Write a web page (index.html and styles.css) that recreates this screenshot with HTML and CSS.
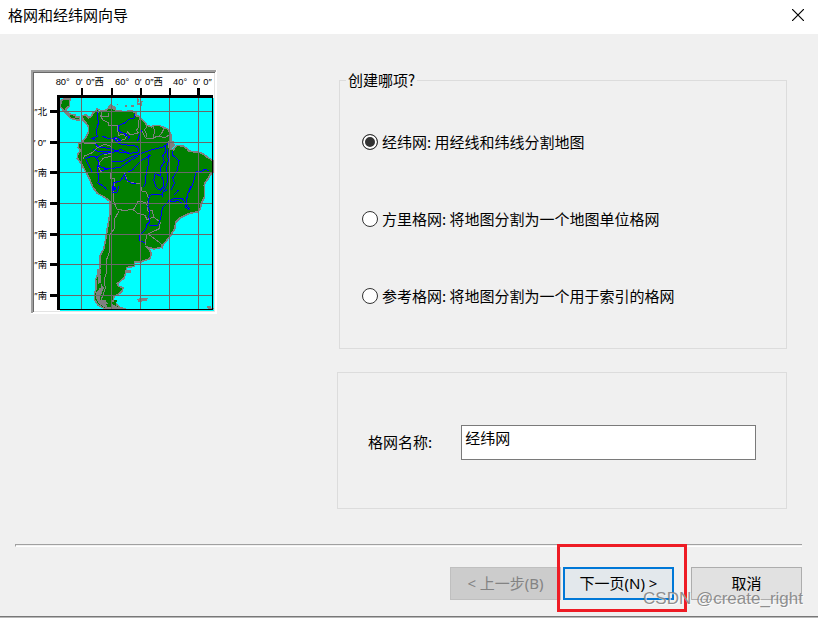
FILE: index.html
```
<!DOCTYPE html>
<html lang="zh-Hans">
  <head>
    <meta charset="UTF-8" />
    <meta name="viewport" content="width=device-width, initial-scale=1.0" />
    <title>格网和经纬网向导</title>
    <link rel="stylesheet" href="styles.css">
  </head>
  <body>
    <header class="title-bar">
      <h1>格网和经纬网向导</h1>
      <button class="close-button" type="button" aria-label="关闭">
        <svg width="12" height="12" viewBox="0 0 12 12">
          <path d="M0 0L12 12M12 0L0 12" stroke="#000" stroke-width="1.2" />
        </svg>
      </button>
    </header>

    <form class="wizard">
      <div class="content">
        <svg class="preview" width="186" height="244" viewBox="18 15 558 732" shape-rendering="crispEdges" role="img" aria-label="地图预览">
          <!-- frame -->
          <path fill="#fff" d="M18 15h558v732H18z" />
          <path fill="#a0a0a0" d="M18 15h555v6H24v723h-6z" />
          <path fill="#696969" d="M24 21h546v3H27v717h-3z" />
          <path fill="#e3e3e3" d="M567 24h3v717H27v-3h540z" />
          <!-- sea -->
          <path fill="#0ff" d="M105 99h462v639H105z" />
          <!-- land -->
          <g fill="#008000" stroke="#808080" stroke-width="5">
            <path d="M108 107L117 102H135L133 112V123L122 132L126 142L136 148L150 150L153 157L163 155V166L150 163L138 160L126 147L117 138L106 125Z" />
            <path d="M172 152L183 150L191 158L199 154L204 143L214 138V131L221 134L219 142L229 137L242 136L250 130L264 130L275 137L300 140L316 137L334 143L332 151L343 155L351 164L360 172L366 181L380 186L386 181H402L416 187L430 193L437 207V224L440 239L434 252L445 254L456 241L474 243L485 250L492 258L512 261L530 264L548 277L564 287V322L555 330L550 341L541 351L538 362V397L529 415L526 430L519 440L490 446L466 458L452 472L450 489L438 510L422 530L408 547L387 552L366 546L372 553L379 566L374 581L350 590H328V604L305 608L303 621L297 640L289 646L277 656L280 664L295 668L290 680L276 690L268 693L263 708L275 719L286 728L302 732H240L218 719L208 703V685L213 672L212 643L219 627L225 606L226 571L236 553L241 528L247 491L254 451L255 409L236 395L217 385L203 366L193 340L177 311L166 292L157 280L158 269L166 257L160 248L161 237L172 230L181 219L190 202V184L183 174L174 165Z" />
          </g>
          <!-- southern fjords and islands -->
          <g fill="#808080">
            <path d="M217 613h12l-3 17 7 11-5 14 9 13-8 20-4 6v12h17l8 12h22l-4 5 17 3 22 6v3h-45l-21-6-19-13-9-17V684l10-13-5-31z" />
            <path d="M336 702l15-4 18 2-4 9-25 1zM300 616h17v9h-17zM546 724h12v5h9v4h-15l-6-4z" />
            <path d="M337 100h3l2 9-3 6h12v6h-14zM250 123l9-7 4 6 11 4v6h-24zM345 109h9v3h-3v12h-3zM429 229h17l4 12-14 14-8-8z" />
            <path d="M318 121h8v4h-8zM300 120h6v5h-6zM275 117h3v4h-3z" />
          </g>
          <path fill="#008000" d="M246 694h17v12h-14zM267 704h9l-3 15h-9zM222 655h5v13h-5zM243 716h18v9h-15zM229 636h5v18h-5z" />
          <!-- country borders -->
          <g fill="none" stroke="#808080" stroke-width="3">
            <path d="M229 140v14h20v-9M225 149l8 15 17 9v7h27l3 32 12-4 12 6-5 10-24 3M280 222l-15-3-4 12 22 1M347 157l-7 12 1 18-7 9 6 8-24 6-8-10-6 12M366 184l-8 12 7 10-3 14M386 186l3 17-5 12M417 190l-7 15-11 11M350 196l12 23 20 2 15-8 22 5 15-9" />
            <path d="M174 233l18 4 20-3 5 14-17 16-22 9-4 8M217 248l21-10 20 6M238 269l20-5v9l-23 7-11 12-4 13 10 18 27 1v15h10l2 17-5 21M260 324l30-1 8 1 10 25 25 7h13l5 22 13 3 6 19-2 17" />
            <path d="M264 369v36l12 27 18 4 31-2 15-26 23 5M325 434l12 11 23 6 6 13 19-8-2-20M385 456l21 15-3 20-37 17M371 508l38 29 4 14M365 510l-5 31M282 438l-12 22-3 32-14 20 2 45-10 26 1 35-9 26 4 26-13 36M365 413l4 26 16-4" />
          </g>
          <!-- rivers -->
          <g fill="none" stroke="#00f" stroke-width="3">
            <path d="M217 140l3 35-7 25 4 14-16 7 12 6M329 148l1 10-19 5-10 10-21 9v12l8 9 14 3 11 10-6 9M232 213l15 7 20 1 8 8 12-3M350 196l-7 14-5 17M261 222l11-5 16 9M299 209l16 6" />
            <path d="M212 237l9 9 35 5 25 10 33 4 25-4M278 235l33 6 27 3 4 16M204 252l11 6 16 2 27 1M180 282l18-8 18 3 17-12 30-2 23-10 27 12M182 284l11 22 9 17M210 274l12 17-6 22 6 25-4 16 15 8 12 13M216 302l32 10M260 288l29 2 32-15 34-12 27-9 32-8 15-10" />
            <path d="M228 317l30-7 27-2 25-18 29-17M257 385l8-15v-16l22-7 13-21 24-13 27-28 26-14M299 326l3 17 17 11 15 2M282 363l-6 18-14 3M369 265l2 32-7 25-4 34-4 11M421 244v17l-8 12 5 18-11 17-1 24-16-6-4 20 8 22 12 8 9-10v-18l-5-13M426 252l4 34-6 24 5 27-4 23-12 24M442 258v12l20 17-6 30-13 22 5 15-9 20M552 318l-12-6-14 9-12-1-5 18-8 24-13 25" />
            <path d="M238 365l7 9M262 362l5 15M498 363l-11 26-3 26-2 12 10 6M460 376l-14 15M426 374l-12 7-1 14M410 388h-20l-16 3-4 17-1 17 5 13-3 18 4 14-10 10-3 14-19 16 2 17 16 8M432 407l-20 22-5 29-7 22-27 2M434 407l15-7h23l5 9 17 23M435 410l25-3 12 9" />
            <path fill="#00f" d="M263 367h7v6h-7z" />
          </g>
          <!-- graticule -->
          <path fill="none" stroke="#696969" stroke-width="3" d="M170 99V732M260 99V732M347 99V732M434 99V732M520 99V732M105 139H561M105 232H561M105 322H561M105 415H561M105 508H561M105 598H561M105 691H561" />
          <path fill="#000" d="M99 90H564V99H99zM97 90h8v645h-8zM561 90h3v645h-3zM99 732h465v3H99z" />
          <path stroke="#000" stroke-width="7" d="M170 69V93M260 69V93M347 69V93M434 69V93M520 69V93" />
          <path stroke="#000" stroke-width="9" d="M75 139H99M75 232H99M75 322H99M75 415H99M75 508H99M75 598H99M75 691H99" />
          <g class="map-label">
            <text x="92" y="60">80°</text>
            <text x="152" y="60">0′</text>
            <text x="183" y="60">0″西</text>
            <text x="270" y="60">60°</text>
            <text x="329" y="60">0′</text>
            <text x="360" y="60">0″西</text>
            <text x="444" y="60">40°</text>
            <text x="504" y="60">0′</text>
            <text x="535" y="60">0″</text>
            <text x="28" y="150">″北</text>
            <text x="26" y="242">′</text>
            <text x="38" y="242">0″</text>
            <text x="28" y="333">″南</text>
            <text x="28" y="426">″南</text>
            <text x="28" y="519">″南</text>
            <text x="28" y="609">″南</text>
            <text x="28" y="702">″南</text>
          </g>
        </svg>

        <div class="settings">
          <fieldset class="group-type">
            <legend>创建哪项?</legend>
            <label><input type="radio" name="grid-type" checked />经纬网: 用经线和纬线分割地图</label>
            <label><input type="radio" name="grid-type" />方里格网: 将地图分割为一个地图单位格网</label>
            <label><input type="radio" name="grid-type" />参考格网: 将地图分割为一个用于索引的格网</label>
          </fieldset>
          <div class="group-name">
            <label for="grid-name">格网名称:</label>
            <input id="grid-name" type="text" value="经纬网" />
          </div>
        </div>
      </div>

      <hr class="divider" />

      <div class="actions">
        <button type="button" disabled>&lt; 上一步(B)</button>
        <div class="next">
          <button class="primary" type="button">下一页(N) &gt;</button>
        </div>
        <button type="button">取消</button>
      </div>
    </form>

    <div class="watermark">CSDN @create_right</div>
  </body>
</html>
```

FILE: styles.css
```
* {
  box-sizing: border-box;
}

html {
  background-color: #b8b8b8;
}

body {
  position: relative;
  display: flex;
  flex-direction: column;
  min-height: calc(100vh - 1px);
  margin: 0;
  font-family: "Noto Sans CJK SC", sans-serif;
  font-size: 15px;
  line-height: 20px;
  color: #000;
  background-color: #f0f0f0;
  border-bottom: 1px solid #777;
}

.title-bar {
  display: flex;
  align-items: center;
  justify-content: space-between;
  height: 34px;
  padding: 0 8px 4px;
  background-color: #fff;
}

.title-bar h1 {
  margin: 0;
  font-size: 15px;
  font-weight: normal;
}

.close-button {
  display: flex;
  align-items: center;
  justify-content: center;
  width: 24px;
  height: 24px;
  padding: 0;
  border: none;
  background: none;
}

.wizard {
  flex-grow: 1;
  display: flex;
  flex-direction: column;
}

.content {
  display: flex;
  gap: 120px;
  padding: 36px 31px 35px;
}

.preview {
  flex-shrink: 0;
}

.map-label {
  font-family: "Liberation Sans", "Noto Sans CJK SC", sans-serif;
  font-size: 28px;
}

.settings {
  flex-grow: 1;
  display: flex;
  flex-direction: column;
  gap: 23px;
}

.group-type {
  display: flex;
  flex-direction: column;
  align-items: flex-start;
  gap: 53px;
  min-width: 0;
  margin: 0 0 0 2px;
  padding: 40px 22px;
  border: 1px solid #dcdcdc;
}

.group-type legend {
  margin-left: -16px;
  padding: 0 2px;
}

.group-type label {
  display: flex;
  align-items: center;
  gap: 4px;
  height: 24px;
}

.group-type input {
  appearance: none;
  width: 16px;
  height: 16px;
  margin: 0;
  border: 1px solid #333;
  border-radius: 50%;
  background-color: #fff;
}

.group-type input:checked {
  background-color: #333;
  box-shadow: inset 0 0 0 2px #fff;
}

.group-name {
  display: flex;
  align-items: center;
  gap: 29px;
  padding: 52px 30px 48px;
  border: 1px solid #dcdcdc;
}

.group-name label {
  padding-bottom: 2px;
}

.group-name input {
  flex-grow: 1;
  min-width: 0;
  height: 35px;
  padding: 0 3px 10px;
  border: 1px solid #7a7a7a;
  font: inherit;
  background-color: #fff;
}

.divider {
  height: 3px;
  margin: 0 16px 0 15px;
  border: 1px solid #a0a0a0;
  border-width: 1px 0 0 1px;
  border-bottom: 1px solid #fff;
}

.actions {
  display: flex;
  justify-content: flex-end;
  gap: 2px;
  padding: 20px 16px 15px;
}

.actions button {
  width: 111px;
  height: 33px;
  padding: 0 0 2px;
  border: 1px solid #adadad;
  font-family: "Noto Sans", "Noto Sans CJK SC", sans-serif;
  font-size: 15px;
  line-height: 20px;
  color: #000;
  background-color: #e1e1e1;
}

.actions button:disabled {
  border-color: #bfbfbf;
  color: #838383;
  background-color: #ccc;
}

.actions .primary {
  border: 2px solid #0078d7;
  background-color: #e3e8ec;
}

.next {
  position: relative;
  margin-right: 15px;
}

/* red highlight around the next button */
.next::after {
  content: "";
  position: absolute;
  inset: -23px -13px -12px -6px;
  border: 3px solid #ee1c25;
  pointer-events: none;
}

.watermark {
  position: absolute;
  right: 15px;
  bottom: 7px;
  font-family: "Liberation Sans", sans-serif;
  font-size: 17px;
  color: rgba(130, 130, 130, 0.9);
  text-shadow: 1px 1px 0 rgba(255, 255, 255, 0.7);
  pointer-events: none;
}
```
